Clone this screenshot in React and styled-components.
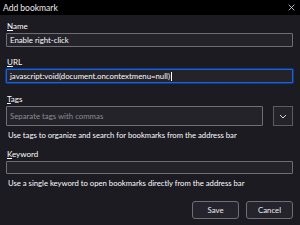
import React from "react";
import styled, { createGlobalStyle } from "styled-components";

const Global = createGlobalStyle`
  html, body { margin: 0; padding: 0; background: #1c1b22; }
  body { font-family: Lato, "Open Sans", sans-serif; }
`;

const Dialog = styled.div`
  width: 300px;
  height: 225px;
  background: #1c1b22;
  color: #fbfbfe;
  display: flex;
  flex-direction: column;
  overflow: hidden;
`;

const TitleBar = styled.div`
  height: 15px;
  flex: none;
  background: #000;
  display: flex;
  align-items: center;
  justify-content: space-between;
  padding: 0 5px 0 3px;
  font-size: 8.5px;
  color: #e8e8ea;
`;

const Close = styled.svg`
  width: 7px;
  height: 7px;
`;

const Body = styled.div`
  display: flex;
  flex-direction: column;
  padding: 6px 7px 0 6px;
`;

const Label = styled.div`
  font-size: 8px;
  line-height: 10px;
  height: 10px;
  padding-left: 1px;
  margin-top: ${(p) => p.$top || 0}px;
  margin-bottom: 2px;
  u { text-decoration-thickness: 0.5px; text-underline-offset: 1px; }
`;

const Input = styled.div`
  height: ${(p) => p.$h || 14}px;
  flex: ${(p) => (p.$grow ? 1 : "none")};
  box-sizing: border-box;
  border: 1px solid ${(p) => (p.$focus ? "#1a62d6" : "#6f6e78")};
  box-shadow: ${(p) => (p.$focus ? "0 0 0 1px #0d3a8a" : "none")};
  background: #24232a;
  border-radius: 1px;
  display: flex;
  align-items: center;
  padding-left: 3px;
  font-size: 7.8px;
  line-height: 10px;
  white-space: nowrap;
  color: ${(p) => (p.$placeholder ? "#8c8b94" : "#fbfbfe")};
`;

const Caret = styled.span`
  display: inline-block;
  width: 1px;
  height: 9px;
  background: #fbfbfe;
  margin-left: 1px;
`;

const Row = styled.div`
  display: flex;
  gap: 10px;
`;

const DropButton = styled.div`
  width: 20px;
  height: 20px;
  flex: none;
  box-sizing: border-box;
  border: 1px solid #5d5c66;
  background: #24232a;
  display: flex;
  align-items: center;
  justify-content: center;
`;

const Help = styled.div`
  font-size: 7.7px;
  line-height: 10px;
  height: 10px;
  padding-left: 2px;
  margin-top: 4px;
  white-space: nowrap;
`;

const Footer = styled.div`
  display: flex;
  justify-content: flex-end;
  gap: 7px;
  margin-top: 13px;
`;

const Button = styled.div`
  width: 47px;
  height: 18px;
  box-sizing: border-box;
  border: 1px solid #6f6e78;
  border-radius: 3px;
  background: #25242c;
  display: flex;
  align-items: center;
  justify-content: center;
  font-size: 7.8px;
  color: #ececf0;
`;

export default function App() {
  return (
    <>
      <Global />
      <Dialog>
        <TitleBar>
          <span>Add bookmark</span>
          <Close viewBox="0 0 10 10">
            <path d="M1 1L9 9M9 1L1 9" stroke="#d8d8dc" strokeWidth="1.2" />
          </Close>
        </TitleBar>
        <Body>
          <Label>
            <u>N</u>ame
          </Label>
          <Input>Enable right-click</Input>
          <Label $top={10}>
            <u>U</u>RL
          </Label>
          <Input $focus>
            javascript:void(document.oncontextmenu=null)
            <Caret />
          </Input>
          <Label $top={11}>
            <u>T</u>ags
          </Label>
          <Row>
            <Input $h={20} $grow $placeholder>
              Separate tags with commas
            </Input>
            <DropButton>
              <svg width="8" height="5" viewBox="0 0 8 5">
                <path d="M1 1L4 4L7 1" stroke="#d8d8dc" strokeWidth="1" fill="none" />
              </svg>
            </DropButton>
          </Row>
          <Help>Use tags to organize and search for bookmarks from the address bar</Help>
          <Label $top={9}>
            <u>K</u>eyword
          </Label>
          <Input $h={13} />
          <Help>Use a single keyword to open bookmarks directly from the address bar</Help>
          <Footer>
            <Button>Save</Button>
            <Button>Cancel</Button>
          </Footer>
        </Body>
      </Dialog>
    </>
  );
}
